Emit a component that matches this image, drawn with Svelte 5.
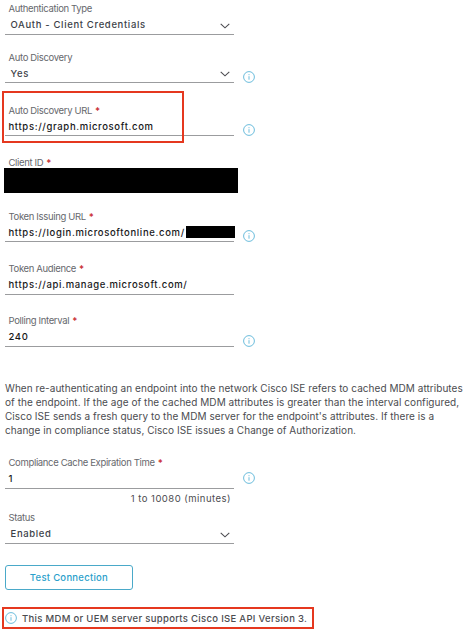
<script>
  let fields = $state([
    { label: 'Authentication Type', value: 'OAuth - Client Credentials', kind: 'select', gap: 15 },
    { label: 'Auto Discovery', value: 'Yes', kind: 'select', info: true, low: true, gap: 20 },
    { label: 'Auto Discovery URL', value: 'https://graph.microsoft.com', required: true, info: true, low: true, marked: true, gap: 19 },
    { label: 'Client ID', value: '', required: true, hidden: 'full', low: true, gap: 21 },
    { label: 'Token Issuing URL', value: 'https://login.microsoftonline.com/', required: true, info: true, low: true, hidden: 'tail', gap: 20 },
    { label: 'Token Audience', value: 'https://api.manage.microsoft.com/', required: true, gap: 19 },
    { label: 'Polling Interval', value: '240', required: true, info: true, gap: 34 }
  ]);

  const cache = { label: 'Compliance Cache Expiration Time', value: '1', required: true, info: true, centered: true, gap: 0 };
  const status = { label: 'Status', value: 'Enabled', kind: 'select', gap: 21 };
</script>

{#snippet infoIcon()}
  <svg class="info-icon" viewBox="0 0 12 12" aria-hidden="true">
    <circle cx="6" cy="6" r="5.4" />
    <path d="M6 5.2v3.5M6 3.2v1" />
  </svg>
{/snippet}

{#snippet row(field)}
  <div class="row" style="margin-bottom: {field.gap}px">
    <div class="field" class:low={field.low}>
      <div class="label">
        {field.label}{#if field.required}<span class="star">*</span>{/if}
      </div>
      <div class="value" class:select={field.kind === 'select'} class:full={field.hidden === 'full'}>
        {#if field.hidden === 'full'}
          <span class="block"></span>
        {:else}
          <span>{field.value}</span>
        {/if}
        {#if field.hidden === 'tail'}
          <span class="tail"></span>
        {/if}
        {#if field.kind === 'select'}
          <svg class="chevron" viewBox="0 0 10 6" aria-hidden="true"><path d="M.7.8 5 4.8 9.3.8" /></svg>
        {/if}
      </div>
    </div>
    {#if field.info}
      <span class="info" class:centered={field.centered}>{@render infoIcon()}</span>
    {/if}
    {#if field.marked}
      <div class="mark"></div>
    {/if}
  </div>
{/snippet}

<main>
  {#each fields as field}
    {@render row(field)}
  {/each}

  <p class="text">
    When re-authenticating an endpoint into the network Cisco ISE refers to cached MDM attributes<br />
    of the endpoint. If the age of the cached MDM attributes is greater than the interval configured,<br />
    Cisco ISE sends a fresh query to the MDM server for the endpoint's attributes. If there is a<br />
    change in compliance status, Cisco ISE issues a Change of Authorization.
  </p>

  {@render row(cache)}
  <div class="hint">1 to 10080 (minutes)</div>
  {@render row(status)}

  <button type="button">Test Connection</button>

  <div class="notice">
    {@render infoIcon()}
    <span>This MDM or UEM server supports Cisco ISE API Version 3.</span>
  </div>
</main>

<style>
  :global(body) { background: #fff; }

  main {
    box-sizing: border-box;
    width: 474px;
    height: 632px;
    padding: 2px 0 0 5px;
    overflow: hidden;
    font-family: Inter, "Liberation Sans", sans-serif;
    color: #4b4c50;
  }

  .row { position: relative; display: flex; height: 33px; }

  .field {
    box-sizing: border-box;
    width: 229px;
    height: 33px;
    border-bottom: 1px solid #9b9c9e;
  }

  .label {
    height: 14px;
    padding-left: 3.5px;
    font-size: 9.5px;
    line-height: 13px;
    letter-spacing: -0.34px;
    color: #66686d;
    white-space: nowrap;
  }

  .low .label { line-height: 15px; }

  .star { margin-left: 3px; color: #c8262c; font-weight: 600; }

  .value {
    display: flex;
    align-items: center;
    height: 17px;
    padding-left: 3.5px;
    box-sizing: border-box;
    font-size: 9.5px;
    font-weight: 500;
    letter-spacing: 0.65px;
    color: #18181a;
    white-space: nowrap;
  }

  .low .value { padding-top: 1px; }
  .value.select { padding-left: 5.5px; color: #3c3f48; }
  .low .value.full { padding: 0; }

  .block {
    flex: none;
    width: 234px;
    height: 25px;
    margin: 6px 0 0 -1px;
    background: #000;
  }

  .tail { width: 49px; height: 12px; margin-left: auto; margin-right: -1px; background: #000; }

  .chevron {
    width: 10px;
    height: 6px;
    margin: 2px 4px 0 auto;
    fill: none;
    stroke: #4b4c50;
    stroke-width: 1.1;
  }

  .info { height: 12px; margin: 21px 0 0 9px; }
  .info.centered { margin-top: 16px; }

  .info-icon {
    display: block;
    flex: none;
    width: 12px;
    height: 12px;
    fill: none;
    stroke: #5bb5d8;
    stroke-width: 0.9;
  }

  .mark {
    position: absolute;
    left: -3px;
    top: -12px;
    box-sizing: border-box;
    width: 182px;
    height: 52px;
    border: 2px solid #e5381f;
  }

  .text {
    height: 56px;
    margin: 0 0 19px;
    font-size: 10px;
    line-height: 14px;
    letter-spacing: 0.05px;
    white-space: nowrap;
  }

  .hint {
    width: 226px;
    height: 22px;
    font-size: 9.5px;
    line-height: 19px;
    letter-spacing: 0.48px;
    text-align: right;
  }

  button {
    display: block;
    width: 128px;
    height: 25px;
    padding: 0;
    border: 1px solid #4aa9c9;
    border-radius: 3px;
    background: #fff;
    font-family: inherit;
    font-size: 9.5px;
    font-weight: 500;
    letter-spacing: 0.27px;
    color: #2b9fcb;
  }

  .notice {
    display: flex;
    align-items: center;
    gap: 5px;
    box-sizing: border-box;
    width: 312px;
    height: 22px;
    margin: 17px 0 0 -3px;
    padding-left: 1px;
    border: 2px solid #e5381f;
    font-size: 9.5px;
    font-weight: 500;
    letter-spacing: 0.31px;
    white-space: nowrap;
  }
</style>
